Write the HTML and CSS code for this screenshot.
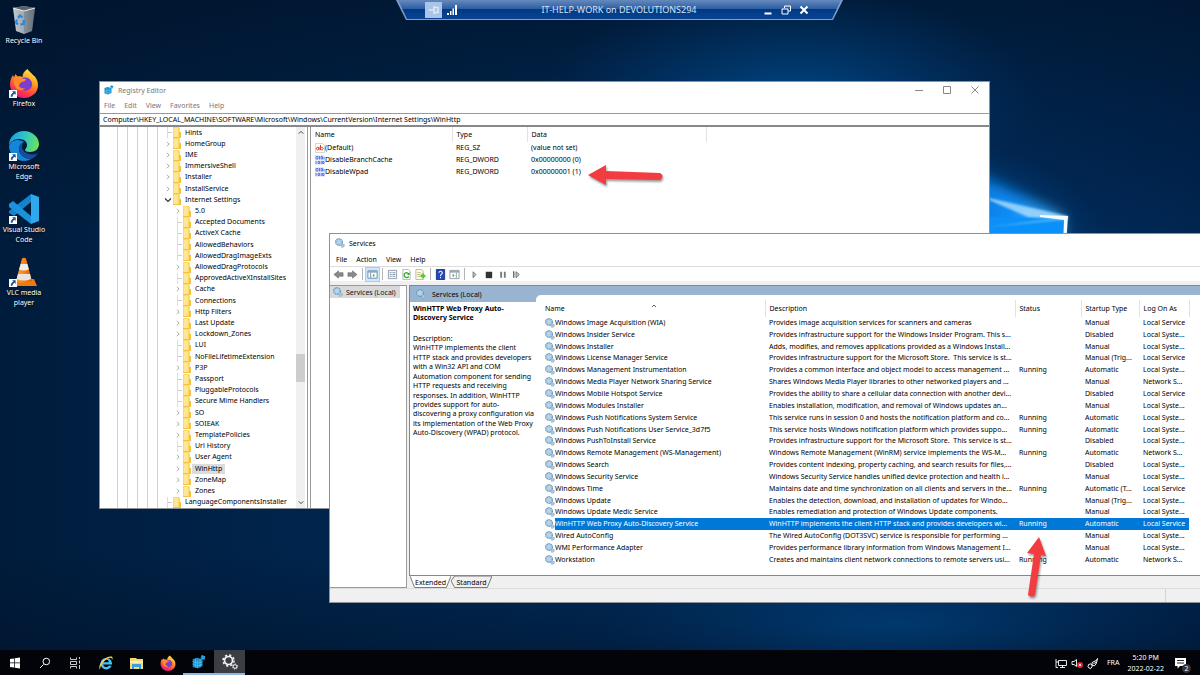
FILE: index.html
```html
<!DOCTYPE html>
<html lang="en">
<head>
  <meta charset="UTF-8">
  <meta name="viewport" content="width=device-width, initial-scale=1.0">
  <link rel="stylesheet" href="styles.css">
  <title>Remote Desktop</title>
</head>
<body>
  <!-- shared icons -->
  <svg class="sprite" aria-hidden="true">
    <defs>
      <linearGradient id="fox" x1="0.8" y1="0" x2="0.3" y2="1">
        <stop offset="0" stop-color="#fff14a"/><stop offset="0.4" stop-color="#ff9a1f"/><stop offset="0.75" stop-color="#ff3b47"/><stop offset="1" stop-color="#e31587"/>
      </linearGradient>
      <linearGradient id="edge-top" x1="0" y1="0.3" x2="1" y2="0.5">
        <stop offset="0" stop-color="#1b9de2"/><stop offset="0.5" stop-color="#2fc5c8"/><stop offset="1" stop-color="#6be35a"/>
      </linearGradient>
      <linearGradient id="bin" x1="0" y1="0" x2="1" y2="0">
        <stop offset="0" stop-color="#c3cbd2"/><stop offset="0.55" stop-color="#9aa4ad"/><stop offset="1" stop-color="#6d7780"/>
      </linearGradient>
      <linearGradient id="cone" x1="0" y1="0" x2="1" y2="0">
        <stop offset="0" stop-color="#ffa02e"/><stop offset="0.5" stop-color="#f78415"/><stop offset="1" stop-color="#d95f00"/>
      </linearGradient>
    </defs>
    <symbol id="folder" viewBox="0 0 10 11">
      <path d="M1 0h6l1 1v10H1z" fill="#ffd966"/>
      <path d="M2 1h4v9H2z" fill="#ffe694"/>
      <path d="M7 5h2v6H1v-1h6z" fill="#f2c14a"/>
    </symbol>
    <symbol id="gears" viewBox="0 0 20 20">
      <circle cx="8" cy="8" r="6.5" fill="#d9ecf8" stroke="#5f93bd" stroke-width="3" stroke-dasharray="2.6 1.5"/>
      <circle cx="8" cy="8" r="5" fill="#cfe6f5" stroke="#79a9cd"/>
      <circle cx="8" cy="8" r="2.3" fill="#fff" stroke="#5f93bd"/>
      <circle cx="15" cy="15" r="3.4" fill="#d9ecf8" stroke="#5888b3" stroke-width="2" stroke-dasharray="1.8 1"/>
      <circle cx="15" cy="15" r="1.3" fill="#fff" stroke="#5f93bd"/>
    </symbol>
    <symbol id="chevron" viewBox="0 0 6 8"><path d="M1.5 1l3 3-3 3" fill="none" stroke="#8c8c8c"/></symbol>
    <symbol id="chevron-down" viewBox="0 0 8 6"><path d="M1 1.5l3 3 3-3" fill="none" stroke="#333" stroke-width="1.2"/></symbol>
    <symbol id="chevron-up" viewBox="0 0 8 6"><path d="M1 4.5l3-3 3 3" fill="none" stroke="#333" stroke-width="1.2"/></symbol>
    <symbol id="dword" viewBox="0 0 10 10">
      <path d="M0 0h8l2 2v8H0z" fill="#e4eafc"/>
      <path d="M1 1.5h2v2.500H1zM4.500 1v3.500M6 1.500h1.500v2.500H6zM9 2v2.500M1 6v3M3 6.500h1.500v2H3zM6.200 6v3M7.500 6.500H9v2H7.500z" fill="none" stroke="#3d60d6" stroke-width=".8"/>
    </symbol>
    <symbol id="string" viewBox="0 0 10 10">
      <path d="M.5.5h7l2 2v7h-9z" fill="#fff" stroke="#c4c4c4" stroke-width=".7"/>
      <path d="M4 3.800v3.400M4 5.500a1.300 1.300 0 1 0 0 .1M5.500 2V7M5.500 5.500a1.300 1.300 0 1 1 0 .1" fill="none" stroke="#d9401f" stroke-width="1"/>
    </symbol>
    <symbol id="firefox" viewBox="0 0 30 30">
      <path d="M18.500 1c1 2 4 4 5.500 6 3 2 5 6 5 10 0 7.500-6 13-14 13S1 24 1 16.500c0-3.500 1-7 3-9.500l1 2.500 1.500-3.500 2 2.500c2-.5 4 0 5 .5C13.500 6 15 3 18.500 1z" fill="url(#fox)"/>
      <path d="M10 13c1-3 4-4 7-3.500 4 .5 6.500 4 6 7.500-.5 4-4 6-7.500 5.500-4-.5-6.500-3.500-5.500-7z" fill="#7a3fd1"/>
      <path d="M5 10c3-2 6-1.500 8.500.5l3.500.500c0 1.500-2 2.500-4 3-2 1-3 2-3 4 1 2 4 3 6 2-2 3-7 3-9 0-2-2.500-3-7-2-10z" fill="#ff8a2a"/>
    </symbol>
    <symbol id="shortcut" viewBox="0 0 9 9">
      <path d="M0 0h9v9H0z" fill="#fff"/>
      <path d="M3.500 1.500h4v4L6.300 4.300C5 5 4 6 4 7.700H2C1.800 5.500 3 3.800 4.900 2.900z" fill="#1c4f9c"/>
    </symbol>
    <symbol id="regedit" viewBox="0 0 20 20">
      <path d="M1 6l6-2 8 2v10l-7 3-7-2z" fill="#1691d0"/>
      <path d="M1 9.500l7 2 7-2M1 13l7 2.500 7-2.500M5 5v13M8 7v12M11.500 6v12" fill="none" stroke="#8fdcff" stroke-width=".6"/>
      <path d="M14 0l5 2-1.500 5-5-2z" fill="#38c0f2"/>
      <path d="M16 3v4M12 3h6" stroke="#0a6ca8" stroke-width=".9"/>
    </symbol>
  </svg>

  <div class="desktop">
    <svg class="wallpaper" viewBox="0 0 1200 650" preserveAspectRatio="none" aria-hidden="true">
      <defs>
        <linearGradient id="base" x1="0" y1="0" x2="1" y2="0">
          <stop offset="0" stop-color="#001c3c"/><stop offset="0.3" stop-color="#00264f"/><stop offset="0.7" stop-color="#003265"/><stop offset="1" stop-color="#002550"/>
        </linearGradient>
        <linearGradient id="shade" x1="0" y1="0" x2="0" y2="1">
          <stop offset="0" stop-color="#001228" stop-opacity="0.7"/><stop offset="0.35" stop-color="#001228" stop-opacity="0"/><stop offset="0.85" stop-color="#001228" stop-opacity="0"/><stop offset="1" stop-color="#001228" stop-opacity="0.5"/>
        </linearGradient>
        <radialGradient id="halo">
          <stop offset="0" stop-color="#0078d8" stop-opacity="0.8"/><stop offset="1" stop-color="#0060b8" stop-opacity="0"/>
        </radialGradient>
        <linearGradient id="beam" x1="1" y1="0.7" x2="0" y2="0.4">
          <stop offset="0" stop-color="#48b8ff"/><stop offset="0.4" stop-color="#0a8cf5"/><stop offset="1" stop-color="#0060c0"/>
        </linearGradient>
        <filter id="soft" x="-20%" y="-20%" width="140%" height="140%"><feGaussianBlur stdDeviation="7"/></filter>
        <filter id="haze" x="-20%" y="-50%" width="140%" height="200%"><feGaussianBlur stdDeviation="1"/></filter>
      </defs>
      <rect width="1200" height="650" fill="url(#base)"/>
      <rect width="1200" height="650" fill="url(#shade)"/>
      <ellipse cx="790" cy="100" rx="250" ry="110" fill="url(#halo)" opacity=".5"/>
      <ellipse cx="940" cy="260" rx="170" ry="120" fill="url(#halo)" opacity=".8"/>
      <ellipse cx="900" cy="625" rx="300" ry="60" fill="url(#halo)" opacity=".3"/>
      <path d="M930 150l132 66v40H930z" fill="url(#beam)" filter="url(#soft)"/>
      <path d="M980 217l85 1v30h-85z" fill="#0a90f8"/>
      <path d="M980 196l88 20v3l-40-2z" fill="#b8e4ff" opacity=".75" filter="url(#haze)"/>
      <path d="M980 228l84-11v3z" fill="#6cc4ff" opacity=".7" filter="url(#haze)"/>
      <path d="M1040 215l28 1-2 30h-3l1-26-24-3z" fill="#f2fbff"/>
    </svg>

    <nav class="shortcuts" aria-label="Desktop">
      <a class="shortcut" href="#">
        <svg viewBox="0 0 30 30"><path d="M4 3l11-2 11 2-3 23-8 3-8-3z" fill="url(#bin)"/><path d="M4 3l11-2 11 2-11 3z" fill="#59636c"/><path d="M15 6v22l8-2 3-22z" fill="#59646e" opacity=".35"/><path d="M4 3l11 3 11-3" fill="none" stroke="#e4e9ed"/><g fill="none" stroke="#2389dc" stroke-width="2.200"><path d="M9 13l2-2.500 2.500 2"/><path d="M15 15l-.5 4-3 .500"/><path d="M9 19.500l-2-2 1-3"/></g></svg>
        Recycle Bin
      </a>
      <a class="shortcut" href="#">
        <svg viewBox="0 0 30 30"><use href="#firefox"/><use href="#shortcut" x="0" y="22" width="8" height="8"/></svg>
        Firefox
      </a>
      <a class="shortcut" href="#">
        <svg viewBox="0 0 30 30"><path d="M0 14C0 6 7 0 15 0s15 6 15 13c0 5-4 8-9 8-3 0-5-1-5-2 0-1 2-2 2-5 0-4-4-6-8-6-5 0-9 3-10 6z" fill="url(#edge-top)"/><path d="M0 15c1-4 5-6 9-6 3 0 5 1 6 2-3 1-5 4-5 7 0 6 6 10 12 10-2 1-4 2-7 2C7 30 0 23 0 15z" fill="#1684d8"/><path d="M15 11c-3 1-5 4-5 7 0 6 6 10 12 10 3-1 5-3 7-6-2 1-4 1.500-6 1.500-6 0-10-4-10-8 0-2 1-3.500 2-4.500z" fill="#154f9c"/><use href="#shortcut" x="0" y="22" width="8" height="8"/></svg>
        Microsoft<br>Edge
      </a>
      <a class="shortcut" href="#">
        <svg viewBox="0 0 30 30"><path d="M22 0l8 3v24l-8 3z" fill="#2fa8ee"/><path d="M22 0v8L5 22 0 19v-2z" fill="#1583cc"/><path d="M22 30v-8L4 7 0 10v3z" fill="#1b93dc"/><use href="#shortcut" x="0" y="22" width="8" height="8"/></svg>
        Visual Studio<br>Code
      </a>
      <a class="shortcut" href="#">
        <svg viewBox="0 0 30 30"><path d="M5 22h20l3 7H2z" fill="#ee7a0c"/><path d="M13 1.500Q15 0 17 1.500L23 24q-8 4-16 0z" fill="url(#cone)"/><path d="M11.700 7h6.700l1.500 5.500q-5 2-9.800 0z" fill="#eee"/><path d="M9 17h12l1.200 5q-7 3-14.500 0z" fill="#e4e4e4"/><use href="#shortcut" x="0" y="22" width="8" height="8"/></svg>
        VLC media<br>player
      </a>
    </nav>

    <section class="window registry">
      <header class="titlebar">
        <svg class="app-icon"><use href="#regedit"/></svg>
        <h1>Registry Editor</h1>
        <div class="window-controls">
          <button aria-label="Minimize"><svg viewBox="0 0 8 8"><path d="M0 4.500h8"/></svg></button>
          <button aria-label="Maximize"><svg viewBox="0 0 8 8"><path d="M.5 .5h7v7h-7z"/></svg></button>
          <button aria-label="Close"><svg viewBox="0 0 8 8"><path d="M.5 .5l7 7M7.500 .5l-7 7"/></svg></button>
        </div>
      </header>
      <div class="menubar">
        <button>File</button><button>Edit</button><button>View</button><button>Favorites</button><button>Help</button>
      </div>
      <input class="address" type="text" aria-label="Key path" value="Computer\HKEY_LOCAL_MACHINE\SOFTWARE\Microsoft\Windows\CurrentVersion\Internet Settings\WinHttp">
      <div class="registry-body">
        <div class="tree-pane">
          <div class="guides"><i></i><i></i><i></i><i></i><i></i></div>
          <ul class="tree">
            <li><i class="branch"></i><svg class="folder"><use href="#folder"/></svg><span>Hints</span></li>
            <li><svg class="chev"><use href="#chevron"/></svg><svg class="folder"><use href="#folder"/></svg><span>HomeGroup</span></li>
            <li><svg class="chev"><use href="#chevron"/></svg><svg class="folder"><use href="#folder"/></svg><span>IME</span></li>
            <li><svg class="chev"><use href="#chevron"/></svg><svg class="folder"><use href="#folder"/></svg><span>ImmersiveShell</span></li>
            <li><svg class="chev"><use href="#chevron"/></svg><svg class="folder"><use href="#folder"/></svg><span>Installer</span></li>
            <li><svg class="chev"><use href="#chevron"/></svg><svg class="folder"><use href="#folder"/></svg><span>InstallService</span></li>
            <li><svg class="chev"><use href="#chevron-down"/></svg><svg class="folder"><use href="#folder"/></svg><span>Internet Settings</span></li>
            <li class="child"><svg class="chev"><use href="#chevron"/></svg><svg class="folder"><use href="#folder"/></svg><span>5.0</span></li>
            <li class="child"><i class="branch"></i><svg class="folder"><use href="#folder"/></svg><span>Accepted Documents</span></li>
            <li class="child"><i class="branch"></i><svg class="folder"><use href="#folder"/></svg><span>ActiveX Cache</span></li>
            <li class="child"><i class="branch"></i><svg class="folder"><use href="#folder"/></svg><span>AllowedBehaviors</span></li>
            <li class="child"><i class="branch"></i><svg class="folder"><use href="#folder"/></svg><span>AllowedDragImageExts</span></li>
            <li class="child"><svg class="chev"><use href="#chevron"/></svg><svg class="folder"><use href="#folder"/></svg><span>AllowedDragProtocols</span></li>
            <li class="child"><i class="branch"></i><svg class="folder"><use href="#folder"/></svg><span>ApprovedActiveXInstallSites</span></li>
            <li class="child"><svg class="chev"><use href="#chevron"/></svg><svg class="folder"><use href="#folder"/></svg><span>Cache</span></li>
            <li class="child"><i class="branch"></i><svg class="folder"><use href="#folder"/></svg><span>Connections</span></li>
            <li class="child"><svg class="chev"><use href="#chevron"/></svg><svg class="folder"><use href="#folder"/></svg><span>Http Filters</span></li>
            <li class="child"><svg class="chev"><use href="#chevron"/></svg><svg class="folder"><use href="#folder"/></svg><span>Last Update</span></li>
            <li class="child"><svg class="chev"><use href="#chevron"/></svg><svg class="folder"><use href="#folder"/></svg><span>Lockdown_Zones</span></li>
            <li class="child"><i class="branch"></i><svg class="folder"><use href="#folder"/></svg><span>LUI</span></li>
            <li class="child"><i class="branch"></i><svg class="folder"><use href="#folder"/></svg><span>NoFileLifetimeExtension</span></li>
            <li class="child"><svg class="chev"><use href="#chevron"/></svg><svg class="folder"><use href="#folder"/></svg><span>P3P</span></li>
            <li class="child"><i class="branch"></i><svg class="folder"><use href="#folder"/></svg><span>Passport</span></li>
            <li class="child"><i class="branch"></i><svg class="folder"><use href="#folder"/></svg><span>PluggableProtocols</span></li>
            <li class="child"><i class="branch"></i><svg class="folder"><use href="#folder"/></svg><span>Secure Mime Handlers</span></li>
            <li class="child"><svg class="chev"><use href="#chevron"/></svg><svg class="folder"><use href="#folder"/></svg><span>SO</span></li>
            <li class="child"><svg class="chev"><use href="#chevron"/></svg><svg class="folder"><use href="#folder"/></svg><span>SOIEAK</span></li>
            <li class="child"><svg class="chev"><use href="#chevron"/></svg><svg class="folder"><use href="#folder"/></svg><span>TemplatePolicies</span></li>
            <li class="child"><i class="branch"></i><svg class="folder"><use href="#folder"/></svg><span>Url History</span></li>
            <li class="child"><svg class="chev"><use href="#chevron"/></svg><svg class="folder"><use href="#folder"/></svg><span>User Agent</span></li>
            <li class="child current"><svg class="chev"><use href="#chevron"/></svg><svg class="folder"><use href="#folder"/></svg><span>WinHttp</span></li>
            <li class="child"><svg class="chev"><use href="#chevron"/></svg><svg class="folder"><use href="#folder"/></svg><span>ZoneMap</span></li>
            <li class="child"><svg class="chev"><use href="#chevron"/></svg><svg class="folder"><use href="#folder"/></svg><span>Zones</span></li>
            <li><i class="branch"></i><svg class="folder"><use href="#folder"/></svg><span>LanguageComponentsInstaller</span></li>
          </ul>
          <div class="scrollbar">
            <svg><use href="#chevron-up"/></svg>
            <i class="thumb"></i>
            <svg><use href="#chevron-down"/></svg>
          </div>
        </div>
        <div class="values-pane">
          <table class="values">
            <thead>
              <tr><th class="value-name">Name</th><th class="value-type">Type</th><th class="value-data">Data</th></tr>
            </thead>
            <tbody>
              <tr><td><svg><use href="#string"/></svg>(Default)</td><td>REG_SZ</td><td>(value not set)</td></tr>
              <tr><td><svg><use href="#dword"/></svg>DisableBranchCache</td><td>REG_DWORD</td><td>0x00000000 (0)</td></tr>
              <tr><td><svg><use href="#dword"/></svg>DisableWpad</td><td>REG_DWORD</td><td>0x00000001 (1)</td></tr>
            </tbody>
          </table>
        </div>
      </div>
    </section>

    <section class="window services">
      <header class="titlebar">
        <svg class="app-icon"><use href="#gears"/></svg>
        <h1>Services</h1>
      </header>
      <div class="menubar">
        <button>File</button><button>Action</button><button>View</button><button>Help</button>
      </div>
      <div class="toolbar">
        <button aria-label="Back"><svg viewBox="0 0 12 12"><path d="M1 6l5-4v2h5v4H6v2z" fill="#8a8a8a" stroke="#666" stroke-width=".6"/></svg></button>
        <button aria-label="Forward"><svg viewBox="0 0 12 12"><path d="M11 6L6 2v2H1v4h5v2z" fill="#8a8a8a" stroke="#666" stroke-width=".6"/></svg></button>
        <i class="divider"></i>
        <button class="pressed" aria-label="Show console tree"><svg viewBox="0 0 12 12"><path d="M1 2h10v8H1z" fill="#fff" stroke="#6b8aa6"/><path d="M1 2h10v2H1z" fill="#8ca6bd"/><path d="M4 4v6" stroke="#6b8aa6"/><path d="M6 7l2-2v4z" fill="#4fa02c"/></svg></button>
        <i class="divider"></i>
        <button aria-label="Properties"><svg viewBox="0 0 12 12"><path d="M1.500 1.500h9v9h-9z" fill="#f3f7fa" stroke="#8c9aa5"/><path d="M3 4h2M6 4h3M3 6h2M6 6h3M3 8h2M6 8h3" stroke="#7a95ad"/></svg></button>
        <button aria-label="Refresh"><svg viewBox="0 0 12 12"><path d="M2 .5h6l2 2v9H2z" fill="#fff" stroke="#b5b5b5"/><path d="M8.500 5.500A2.700 2.700 0 1 0 8.500 8" fill="none" stroke="#36a82d" stroke-width="1.400"/><path d="M9.500 3.500v3H6.500z" fill="#36a82d"/></svg></button>
        <button aria-label="Export list"><svg viewBox="0 0 12 12"><path d="M1 .5h6l2 2v9H1z" fill="#fffbe0" stroke="#bdb68a"/><path d="M2.500 4h4M2.500 6h3M2.500 8h3" stroke="#a09a75" stroke-width=".7"/><path d="M6 6h2V4l4 3.500L8 11V9H6z" fill="#5ec232"/></svg></button>
        <i class="divider"></i>
        <button aria-label="Help"><svg viewBox="0 0 12 12"><path d="M1.500 .5h9v11h-9z" fill="#2348b8" stroke="#17338a"/><path d="M4.300 4.200a1.800 1.800 0 1 1 2.500 1.700Q6 6.500 6 7.500M6 8.500v1.500" fill="none" stroke="#fff" stroke-width="1.200"/></svg></button>
        <button aria-label="Show action pane"><svg viewBox="0 0 12 12"><path d="M1 1.500h10v9H1z" fill="#fff" stroke="#8c9aa5"/><path d="M1 2h10v2H1z" fill="#97a9b8"/><path d="M8 4v6" stroke="#8c9aa5"/><path d="M4 5l2 2-2 2z" fill="#4fa02c"/></svg></button>
        <i class="divider"></i>
        <button aria-label="Start service"><svg viewBox="0 0 12 12"><path d="M4.500 3l3 3-3 3.500z" fill="#ccc" stroke="#6a6a6a"/></svg></button>
        <button aria-label="Stop service"><svg viewBox="0 0 12 12"><path d="M3 3h7v7H3z" fill="#333"/></svg></button>
        <button aria-label="Pause service"><svg viewBox="0 0 12 12"><path d="M3.500 3h2v6.500h-2zM7.500 3h2v6.500h-2z" fill="#777"/></svg></button>
        <button aria-label="Restart service"><svg viewBox="0 0 12 12"><path d="M3 2.500v7" stroke="#555" stroke-width="1.400"/><path d="M5.500 3l3.500 3-3.500 3.500z" fill="#ccc" stroke="#6a6a6a"/></svg></button>
      </div>
      <div class="panes">
        <div class="console-tree">
          <a href="#" class="node"><svg><use href="#gears"/></svg>Services (Local)</a>
        </div>
        <div class="result-pane">
          <div class="extended">
            <div class="details">
              <h2><svg><use href="#gears"/></svg>Services (Local)</h2>
              <div class="details-text">
                <h3>WinHTTP Web Proxy Auto-<br>Discovery Service</h3>
                <p>Description:<br>WinHTTP implements the client<br>HTTP stack and provides developers<br>with a Win32 API and COM<br>Automation component for sending<br>HTTP requests and receiving<br>responses. In addition, WinHTTP<br>provides support for auto-<br>discovering a proxy configuration via<br>its implementation of the Web Proxy<br>Auto-Discovery (WPAD) protocol.</p>
              </div>
            </div>
            <div class="service-list">
              <table>
                <thead>
                  <tr><th class="col-name">Name<svg class="sort"><use href="#chevron-up"/></svg></th><th class="col-description">Description</th><th class="col-status">Status</th><th class="col-startup">Startup Type</th><th class="col-logon">Log On As</th></tr>
                </thead>
                <tbody>
                  <tr><td><svg><use href="#gears"/></svg><span>Windows Image Acquisition (WIA)</span></td><td>Provides image acquisition services for scanners and cameras</td><td></td><td>Manual</td><td>Local Service</td></tr>
                  <tr><td><svg><use href="#gears"/></svg><span>Windows Insider Service</span></td><td>Provides infrastructure support for the Windows Insider Program. This s...</td><td></td><td>Disabled</td><td>Local Syste...</td></tr>
                  <tr><td><svg><use href="#gears"/></svg><span>Windows Installer</span></td><td>Adds, modifies, and removes applications provided as a Windows Install...</td><td></td><td>Manual</td><td>Local Syste...</td></tr>
                  <tr><td><svg><use href="#gears"/></svg><span>Windows License Manager Service</span></td><td>Provides infrastructure support for the Microsoft Store.&nbsp; This service is st...</td><td></td><td>Manual (Trig...</td><td>Local Service</td></tr>
                  <tr><td><svg><use href="#gears"/></svg><span>Windows Management Instrumentation</span></td><td>Provides a common interface and object model to access management ...</td><td>Running</td><td>Automatic</td><td>Local Syste...</td></tr>
                  <tr><td><svg><use href="#gears"/></svg><span>Windows Media Player Network Sharing Service</span></td><td>Shares Windows Media Player libraries to other networked players and ...</td><td></td><td>Manual</td><td>Network S...</td></tr>
                  <tr><td><svg><use href="#gears"/></svg><span>Windows Mobile Hotspot Service</span></td><td>Provides the ability to share a cellular data connection with another devi...</td><td></td><td>Disabled</td><td>Local Service</td></tr>
                  <tr><td><svg><use href="#gears"/></svg><span>Windows Modules Installer</span></td><td>Enables installation, modification, and removal of Windows updates an...</td><td></td><td>Manual</td><td>Local Syste...</td></tr>
                  <tr><td><svg><use href="#gears"/></svg><span>Windows Push Notifications System Service</span></td><td>This service runs in session 0 and hosts the notification platform and co...</td><td>Running</td><td>Automatic</td><td>Local Syste...</td></tr>
                  <tr><td><svg><use href="#gears"/></svg><span>Windows Push Notifications User Service_3d7f5</span></td><td>This service hosts Windows notification platform which provides suppo...</td><td>Running</td><td>Automatic</td><td>Local Syste...</td></tr>
                  <tr><td><svg><use href="#gears"/></svg><span>Windows PushToInstall Service</span></td><td>Provides infrastructure support for the Microsoft Store.&nbsp; This service is st...</td><td></td><td>Disabled</td><td>Local Syste...</td></tr>
                  <tr><td><svg><use href="#gears"/></svg><span>Windows Remote Management (WS-Management)</span></td><td>Windows Remote Management (WinRM) service implements the WS-M...</td><td>Running</td><td>Automatic</td><td>Network S...</td></tr>
                  <tr><td><svg><use href="#gears"/></svg><span>Windows Search</span></td><td>Provides content indexing, property caching, and search results for files,...</td><td></td><td>Disabled</td><td>Local Syste...</td></tr>
                  <tr><td><svg><use href="#gears"/></svg><span>Windows Security Service</span></td><td>Windows Security Service handles unified device protection and health i...</td><td></td><td>Manual</td><td>Local Syste...</td></tr>
                  <tr><td><svg><use href="#gears"/></svg><span>Windows Time</span></td><td>Maintains date and time synchronization on all clients and servers in the...</td><td>Running</td><td>Automatic (T...</td><td>Local Service</td></tr>
                  <tr><td><svg><use href="#gears"/></svg><span>Windows Update</span></td><td>Enables the detection, download, and installation of updates for Windo...</td><td></td><td>Manual (Trig...</td><td>Local Syste...</td></tr>
                  <tr><td><svg><use href="#gears"/></svg><span>Windows Update Medic Service</span></td><td>Enables remediation and protection of Windows Update components.</td><td></td><td>Manual</td><td>Local Syste...</td></tr>
                  <tr class="selected"><td><svg><use href="#gears"/></svg><span>WinHTTP Web Proxy Auto-Discovery Service</span></td><td>WinHTTP implements the client HTTP stack and provides developers wi...</td><td>Running</td><td>Automatic</td><td>Local Service</td></tr>
                  <tr><td><svg><use href="#gears"/></svg><span>Wired AutoConfig</span></td><td>The Wired AutoConfig (DOT3SVC) service is responsible for performing ...</td><td></td><td>Manual</td><td>Local Syste...</td></tr>
                  <tr><td><svg><use href="#gears"/></svg><span>WMI Performance Adapter</span></td><td>Provides performance library information from Windows Management I...</td><td></td><td>Manual</td><td>Local Syste...</td></tr>
                  <tr><td><svg><use href="#gears"/></svg><span>Workstation</span></td><td>Creates and maintains client network connections to remote servers usi...</td><td>Running</td><td>Automatic</td><td>Network S...</td></tr>
                </tbody>
              </table>
            </div>
          </div>
          <div class="view-tabs">
            <button class="active"><svg viewBox="0 0 44 12" preserveAspectRatio="none"><path d="M0 0l5 11.500h34L44 0"/></svg>Extended</button>
            <button><svg viewBox="0 0 44 12" preserveAspectRatio="none"><path d="M4 0L0 5l4 6.500h35L44 0z"/></svg>Standard</button>
          </div>
        </div>
      </div>
      <footer class="statusbar"><i></i></footer>
    </section>

    <!-- callout arrows -->
    <svg class="arrow arrow-value" viewBox="0 0 80 24" aria-hidden="true"><path d="M3 11L21 1v6l54 2q5 3 0 7L21 15v6z"/></svg>
    <svg class="arrow arrow-status" viewBox="0 0 24 68" aria-hidden="true"><path d="M14 3l7 19-5-1-6 40q-3 3-7 0L9 20l-7-1z"/></svg>

    <div class="rdp-bar">
      <div class="rdp-inner">
        <button class="pin" aria-label="Pin"><svg viewBox="0 0 17 16"><path d="M4 8h5M9 4v8M9 5.500h4v5H9" fill="none" stroke="#dce9f8" stroke-width="1.500"/></svg></button>
        <svg class="signal" viewBox="0 0 10 10"><path d="M0 8h2v2H0zM3 6h1.500v4H3zM5.500 3.500H7V10H5.500zM8 0h2v10H8z" fill="#fff"/></svg>
        <span class="rdp-title">IT-HELP-WORK on DEVOLUTIONS294</span>
        <button aria-label="Minimize"><svg viewBox="0 0 10 10"><path d="M1.500 8.500h7" stroke-width="2"/></svg></button>
        <button aria-label="Restore"><svg viewBox="0 0 10 10"><path d="M3.500 3V1h6v5H7M1 4h6v5H1z"/></svg></button>
        <button aria-label="Close"><svg viewBox="0 0 10 10"><path d="M1.500 1.500l7 7M8.500 1.500l-7 7" stroke-width="2"/></svg></button>
      </div>
    </div>
  </div>

  <footer class="taskbar">
    <button aria-label="Start"><svg viewBox="0 0 16 16"><path d="M3 4l4-.6v4.200H3zM7.700 3.300L13 2.500v5.100H7.700zM3 8.300h4v4.200L3 12zM7.700 8.300H13v5.200l-5.300-.8z" fill="#fff"/></svg></button>
    <button aria-label="Search"><svg viewBox="0 0 16 16"><path d="M6.500 9.500L3 13M6 6.500a3.300 3.300 0 1 1 6.600 0a3.300 3.300 0 1 1-6.600 0z" fill="none" stroke="#fff"/></svg></button>
    <button aria-label="Task View"><svg viewBox="0 0 16 16"><path d="M3.500 2.500v2h6v-2M3.500 6.500h6v3h-6zM3.500 13.500v-2h6v2M12.500 2v2M12.500 5.500v3M12.500 10v4" fill="none" stroke="#ccc"/></svg></button>
    <button aria-label="Internet Explorer"><svg viewBox="0 0 16 16"><path d="M14 9.500H5.200a3 3 0 0 0 5.500 1.200h3A5.800 5.800 0 1 1 14 8zM5.300 7.200h5.400a2.700 2.700 0 0 0-5.400 0z" fill="#4cc0f5"/><path d="M2 14.500C-1 11 6 2 12 1.500c3-.5 3 1.500 2 3.500 0-1.500-.5-2.500-2.500-2C7 4 2 10 2 14.500z" fill="#ffd24a"/></svg></button>
    <button aria-label="File Explorer"><svg viewBox="0 0 16 16"><path d="M1 3h6l1 1h6v10H1z" fill="#f8d775"/><path d="M1 6h13v2H1z" fill="#ffeeb0"/><path d="M3 9h9v5h-2v-2H5v2H3z" fill="#3a9ed9"/></svg></button>
    <button aria-label="Firefox"><svg viewBox="0 0 16 16"><use href="#firefox"/></svg></button>
    <button class="open" aria-label="Registry Editor"><svg viewBox="0 0 16 16"><use href="#regedit" x="1" y="1" width="14" height="14"/></svg></button>
    <button class="open focused" aria-label="Services"><svg viewBox="0 0 16 16"><g fill="none" stroke="#f2f2f2"><circle cx="6.500" cy="6.500" r="4" stroke-width="1.700"/><circle cx="6.500" cy="6.500" r="5.500" stroke-width="1.500" stroke-dasharray="2.200 2.120"/><circle cx="13" cy="12.500" r="1.800"/><circle cx="13" cy="12.500" r="2.600" stroke-dasharray="1 1.040"/></g></svg></button>
    <div class="tray">
      <svg viewBox="0 0 12 12"><path d="M3.500 3.500h8v5h-8zM7.500 8.500v2M5 10.500h5M3.500 5H1V2M1 5v5.500h2" fill="none" stroke="#fff" stroke-width=".9"/></svg>
      <svg viewBox="0 0 12 12"><path d="M1 4.500h2l2.500-2v7L3 7.500H1z" fill="none" stroke="#fff" stroke-width=".9"/><circle cx="9" cy="8" r="3" fill="#e0243a"/><path d="M7.800 6.800l2.400 2.400M10.200 6.800L7.800 9.200" stroke="#fff" stroke-width=".8"/></svg>
      <svg viewBox="0 0 12 12"><path d="M1 9.500q0-3 2.500-2.500t1.500 3-3 1zM5 8Q4 5 7 4.500T10.500 1.500M5 8q3 2 4-1t1.500-5.500M6.500 7q1-1.500 2.500-1.500" fill="none" stroke="#fff" stroke-width="1"/></svg>
      <span class="language">FRA</span>
      <time class="clock">5:20 PM<br>2022-02-22</time>
      <button class="notifications" aria-label="Notifications, 2 new"><svg viewBox="0 0 14 14"><path d="M1 2h11v8H6L3.500 12.500V10H1z" fill="#fff"/><path d="M3 4.500h7M3 7h7" stroke="#222"/></svg><span>2</span></button>
    </div>
  </footer>
</body>
</html>
```
FILE: styles.css
```css
* {
  box-sizing: border-box;
}

body {
  margin: 0;
  height: 100vh;
  display: flex;
  flex-direction: column;
  overflow: hidden;
  background: #00162f;
  font-family: "Noto Sans", "Open Sans", sans-serif;
  font-size: 7px;
  color: #000;
}

button,
input {
  margin: 0;
  padding: 0;
  border: none;
  background: none;
  font: inherit;
  color: inherit;
}

svg {
  display: block;
  flex: none;
}

h1,
h2,
h3,
p,
ul {
  margin: 0;
  padding: 0;
  font-size: 7px;
  font-weight: normal;
}

.sprite {
  position: absolute;
  width: 0;
  height: 0;
}

.desktop {
  position: relative;
  flex: 1;
  min-height: 0;
  overflow: hidden;
}

.wallpaper {
  position: absolute;
  top: 0;
  left: 0;
  width: 100%;
  height: 100%;
}

/* Desktop shortcuts */
.shortcuts {
  position: relative;
  display: grid;
  grid-auto-rows: 63px;
  width: 48px;
  padding-top: 5px;
}

.shortcut {
  display: flex;
  flex-direction: column;
  align-items: center;
  line-height: 10px;
  text-align: center;
  white-space: nowrap;
  color: #fff;
  text-decoration: none;
  text-shadow: 0 1px 2px #000;
}

.shortcut svg {
  width: 30px;
  height: 30px;
  margin-bottom: 1px;
}

/* Windows */
.window {
  position: absolute;
  display: flex;
  flex-direction: column;
  background: #fff;
  border: 1px solid #8c9298;
}

.registry {
  top: 81px;
  left: 99px;
  width: 891px;
  height: 428px;
}

.services {
  top: 233px;
  left: 329px;
  right: -40px;
  height: 370px;
  background: #f0f0f0;
}

.titlebar {
  display: flex;
  align-items: center;
  gap: 4px;
  height: 16px;
  padding-left: 4px;
  background: #fff;
}

.app-icon {
  width: 10px;
  height: 10px;
}

.registry h1,
.registry .menubar {
  color: #777;
}

.window-controls {
  display: flex;
  margin-left: auto;
}

.window-controls button {
  display: flex;
  justify-content: center;
  width: 28px;
}

.window-controls svg {
  width: 8px;
  height: 8px;
  fill: none;
  stroke: #888;
}

.menubar {
  display: flex;
  align-items: center;
  gap: 9px;
  height: 15px;
  padding-left: 4px;
  background: #fff;
}

.address {
  height: 14px;
  padding: 0 3px;
  border-top: 1px solid #999;
  border-bottom: 2px solid #85898c;
  background: #fff;
}

.registry-body {
  display: flex;
  flex: 1;
  min-height: 0;
}

.tree-pane {
  display: flex;
  width: 208px;
  padding-right: 2px;
  border-right: 1px solid #999;
}

.guides {
  display: flex;
  gap: 9px;
  padding-left: 17px;
}

.guides i {
  width: 1px;
  background: #d2d2d2;
}

.tree {
  display: flex;
  flex-direction: column;
  flex: 1;
  min-width: 0;
  list-style: none;
}

.tree li {
  display: flex;
  align-items: center;
  flex: 1;
  min-height: 0;
  padding-left: 6px;
  line-height: 10px;
  white-space: nowrap;
}

.tree .child {
  padding-left: 16px;
}

.chev,
.branch {
  width: 8px;
  height: 6px;
}

.branch {
  width: 5px;
  height: 100%;
  margin-left: 3px;
  border-left: 1px solid #ddd;
  background: linear-gradient(#ccc, #ccc) center / 100% 1px no-repeat;
}

.folder {
  width: 10px;
  height: 11px;
}

.tree span {
  padding: 0 3px;
}

.tree .current span {
  background: #dcdcdc;
}

.scrollbar {
  display: flex;
  flex-direction: column;
  align-items: center;
  width: 9px;
  padding: 3px 0;
  background: #f0f0f0;
}

.scrollbar svg {
  width: 6px;
  height: 5px;
}

.thumb {
  width: 9px;
  height: 28px;
  margin-top: 219px;
  margin-bottom: auto;
  background: #cdcdcd;
}

.values-pane {
  flex: 1;
  margin-left: 2px;
  border-left: 1px solid #999;
}

table {
  border-collapse: collapse;
  table-layout: fixed;
}

th,
td {
  padding: 0 4px;
  font-weight: normal;
  text-align: left;
  line-height: 10px;
  white-space: nowrap;
}

th {
  border-right: 1px solid #e2e2e2;
}

.values {
  width: 396px;
}

.values th {
  height: 15px;
}

.values td {
  height: 12px;
}

.value-name {
  width: 141px;
}

.value-type {
  width: 75px;
}

td svg {
  float: left;
  width: 10px;
  height: 10px;
}

/* Services console */
.services .titlebar {
  height: 18px;
  padding-left: 5px;
}

.services .menubar {
  height: 14px;
  padding-left: 6px;
}

.toolbar {
  display: flex;
  align-items: center;
  gap: 1px;
  height: 15px;
  padding-left: 2px;
  border-top: 1px solid #ddd;
  background: #fff;
}

.toolbar button {
  padding: 1px;
}

.toolbar svg {
  width: 11px;
  height: 11px;
}

.toolbar .pressed {
  background: #cce8ff;
  outline: 1px solid #99d1ff;
}

.divider {
  width: 1px;
  height: 12px;
  margin: 0 2px;
  background: #b5b5b5;
}

.panes {
  display: flex;
  flex: 1;
  min-height: 0;
  margin-top: 4px;
}

.console-tree {
  width: 77px;
  margin-right: 2px;
  border: 1px solid #9a9a9a;
  border-left: none;
  background: #fff;
}

.node {
  display: flex;
  align-items: center;
  gap: 3px;
  width: 70px;
  height: 12px;
  padding-left: 3px;
  background: #d9d9d9;
  color: #111;
  text-decoration: none;
  white-space: nowrap;
}

.node svg,
.details h2 svg {
  width: 10px;
  height: 10px;
}

.result-pane {
  display: flex;
  flex-direction: column;
  flex: 1;
  min-width: 0;
}

.extended {
  display: flex;
  flex: 1;
  min-height: 0;
  border: 1px solid #828790;
  background: #99b4d1;
}

.details {
  display: flex;
  flex-direction: column;
  width: 126px;
}

.details h2 {
  display: flex;
  align-items: center;
  gap: 6px;
  height: 16px;
  padding-left: 6px;
}

.details-text {
  flex: 1;
  padding: 2px 0 0 3px;
  background: #fff;
  line-height: 1.35;
  white-space: nowrap;
}

.details-text h3 {
  margin-bottom: 11px;
  font-weight: bold;
}

.service-list {
  flex: 1;
  margin-top: 9px;
  padding: 5px 0 0 5px;
  border-top-left-radius: 5px;
  background: #fff;
  overflow: hidden;
}

.service-list table {
  width: 648px;
  height: 266px;
}

.service-list th {
  height: 17px;
}

.col-name {
  width: 224px;
}

.col-description {
  width: 250px;
}

.col-status {
  width: 66px;
}

.col-startup {
  width: 58px;
}

.col-logon {
  width: 50px;
}

.sort {
  float: right;
  width: 6px;
  height: 4px;
  margin-right: 104px;
}

.selected td {
  background: #0078d7;
  color: #fff;
}

.selected td:first-child {
  background: linear-gradient(90deg, #fff 14px, #0078d7 14px);
}

/* Extended / Standard tabs */
.view-tabs {
  position: relative;
  z-index: 0;
  display: flex;
  height: 12px;
  padding-left: 1px;
}

.view-tabs button {
  position: relative;
  width: 41px;
  line-height: 11px;
}

.view-tabs svg {
  position: absolute;
  z-index: -1;
  top: 0;
  left: 0;
  width: 100%;
  height: 12px;
  fill: #f0f0f0;
  stroke: #777;
}

.view-tabs .active svg {
  fill: #fff;
}

.statusbar {
  height: 14px;
  border-top: 1px solid #ddd;
  background: #f0f0f0;
}

.statusbar i {
  display: block;
  width: 836px;
  height: 100%;
  border-right: 1px solid #d4d4d4;
}

/* Callouts */
.arrow {
  position: absolute;
  fill: #f23c3f;
  filter: drop-shadow(1px 2px 1px rgba(0, 0, 0, 0.4));
}

.arrow-value {
  top: 164px;
  left: 585px;
  width: 80px;
  height: 24px;
}

.arrow-status {
  top: 534px;
  left: 1025px;
  width: 24px;
  height: 68px;
}

/* Connection bar */
.rdp-bar {
  position: absolute;
  top: 0;
  left: 396px;
  width: 447px;
  height: 20px;
  padding: 0 2px 1px;
  background: #7fa0cc;
  clip-path: polygon(0 0, 100% 0, 437px 100%, 10px 100%);
}

.rdp-inner {
  display: flex;
  align-items: center;
  height: 19px;
  padding: 0 28px 0 27px;
  background: linear-gradient(#6489bd, #2f5fa3 45%, #003a84 50%, #0a4391);
  clip-path: polygon(0 0, 100% 0, 434px 100%, 9px 100%);
  color: #d5e2f5;
}

.rdp-inner button {
  display: flex;
  justify-content: center;
  width: 18px;
}

.rdp-inner button svg {
  width: 10px;
  height: 10px;
  fill: none;
  stroke: #fff;
}

.rdp-inner .pin {
  width: 17px;
  margin-right: 5px;
  background: #a9c4e6;
}

.rdp-inner .pin svg {
  width: 17px;
  height: 16px;
}

.signal {
  width: 10px;
  height: 10px;
}

.rdp-title {
  flex: 1;
  padding-left: 22px;
  font-size: 9px;
  text-align: center;
}

/* Taskbar */
.taskbar {
  display: flex;
  height: 25px;
  background: #020409;
  color: #fff;
}

.taskbar > button {
  display: flex;
  align-items: center;
  justify-content: center;
  width: 31px;
}

.taskbar > button:nth-child(-n+3) {
  width: 30px;
}

.taskbar > button svg {
  width: 16px;
  height: 16px;
}

.taskbar > .open {
  border-bottom: 2px solid #8fb9de;
}

.taskbar > .focused {
  background: #3a3d42;
}

.tray {
  display: flex;
  align-items: center;
  gap: 4px;
  margin-left: auto;
  padding-right: 12px;
}

.tray > svg {
  width: 12px;
  height: 12px;
}

.language {
  margin-left: 4px;
}

.clock {
  margin-left: 4px;
  line-height: 11px;
  text-align: center;
}

.notifications {
  position: relative;
  margin-left: 6px;
}

.notifications svg {
  width: 14px;
  height: 14px;
}

.notifications span {
  position: absolute;
  right: -3px;
  bottom: -3px;
  width: 9px;
  border-radius: 50%;
  background: #333;
  line-height: 9px;
}
```
